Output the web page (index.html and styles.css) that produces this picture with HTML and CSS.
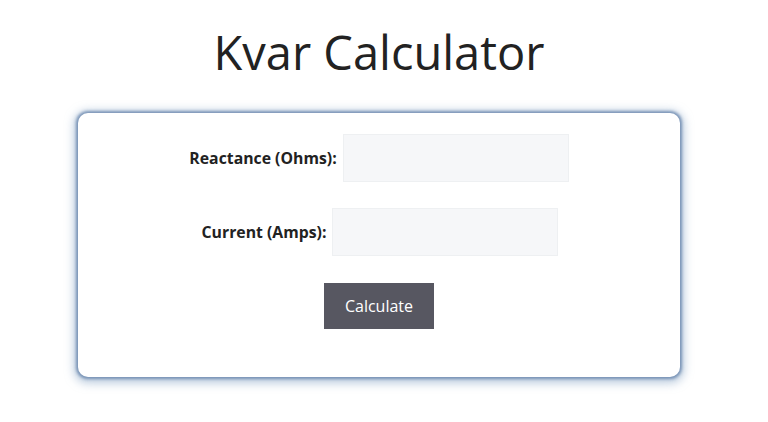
FILE: index.html
```html
<!DOCTYPE html>
<html lang="en">
<head>
  <meta charset="UTF-8">
  <title>Kvar Calculator</title>
  <link rel="stylesheet" href="styles.css">
</head>
<body>
  <div class="page">
    <h1>Kvar Calculator</h1>

    <div class="card">
      <div class="row">
        <label for="reactance">Reactance (Ohms):</label>
        <input type="number" id="reactance">
      </div>
      <div class="row">
        <label for="current">Current (Amps):</label>
        <input type="number" id="current">
      </div>
      <button id="calcBtn">Calculate</button>
      <p id="result"></p>
    </div>
  </div>

  <script>
    document.getElementById('calcBtn').addEventListener('click', () => {
      const x = parseFloat(document.getElementById('reactance').value);
      const i = parseFloat(document.getElementById('current').value);
      if (isNaN(x) || isNaN(i)) return;
      const kvar = (i * i * x) / 1000;
      document.getElementById('result').innerText = `Kvar: ${kvar.toFixed(2)}`;
    });
  </script>
</body>
</html>
```

FILE: styles.css
```css
body {
  font-family: "Open Sans", "Noto Sans", sans-serif;
  background: #fff;
  color: #222;
  margin: 0;
  padding: 0;
}
.page {
  width: 758px;
  padding-bottom: 40px;
  display: flex;
  flex-direction: column;
  align-items: center;
}
h1 {
  font-size: 47px;
  font-weight: 400;
  margin: 20px 0 29px;
  line-height: 64px;
  color: #222;
}
.card {
  width: 602px;
  box-sizing: border-box;
  background: #fff;
  border-radius: 10px;
  box-shadow: 0 0 3px 2px rgba(100, 130, 170, 0.8), 0 2px 10px 4px rgba(130, 160, 195, 0.55);
  padding: 21px 20px 48px;
  display: flex;
  flex-direction: column;
  align-items: center;
}
.row {
  display: flex;
  align-items: center;
  gap: 6px;
  margin-bottom: 26px;
}
.row:nth-child(2) {
  margin-bottom: 27px;
}
.row:nth-child(2) label {
  margin-left: 2px;
}
label {
  font-size: 15.8px;
  font-weight: 700;
  color: #222;
}
input {
  width: 226px;
  height: 48px;
  box-sizing: border-box;
  border: 1px solid #eef0f2;
  background: #f6f7f9;
  font-size: 15px;
  padding: 0 10px;
}
button {
  width: 110px;
  height: 46px;
  border: none;
  background: #575761;
  color: #fff;
  font-family: inherit;
  font-size: 16px;
  cursor: pointer;
}
#result {
  margin: 0;
  font-size: 15px;
}
#result:empty {
  display: none;
}
```
